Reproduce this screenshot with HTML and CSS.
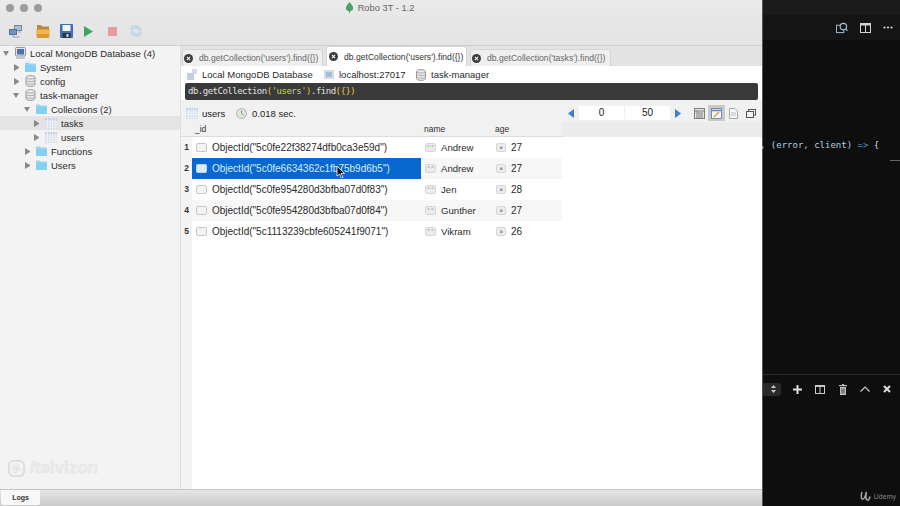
FILE: index.html
```html
<!DOCTYPE html>
<html lang="en">
<head>
<meta charset="utf-8">
<title>Robo 3T - 1.2</title>
<link rel="stylesheet" href="styles.css">
</head>
<body>
<svg class="defs" width="0" height="0" aria-hidden="true">
  <symbol id="folder" viewBox="0 0 11 10"><path d="M0 1.500q0-1 1-1h2.500l1 1H10q1 0 1 1V9q0 1-1 1H1q-1 0-1-1z" fill="#93d7f3"/><path d="M0 3h11v6q0 1-1 1H1q-1 0-1-1z" fill="#84d0f1"/></symbol>
  <symbol id="db" viewBox="0 0 10 12"><path d="M.5 2.500c0-2.500 9-2.500 9 0v7c0 2.500-9 2.500-9 0z" fill="#e9e9e9" stroke="#9a9a9a"/><path d="M.5 2.800c1 1.600 8 1.600 9 0M.5 5.400c1 1.600 8 1.600 9 0M.5 8c1 1.600 8 1.600 9 0" fill="none" stroke="#9a9a9a" stroke-width=".8"/></symbol>
  <symbol id="grid" viewBox="0 0 12 11"><rect width="12" height="11" fill="#d5ddeb"/><rect width="12" height="2" fill="#c3cfe2"/><path d="M0 4h12M0 6.500h12M0 9h12M2.500 0v11M5 0v11M7.500 0v11M10 0v11" stroke="#f6f8fb" stroke-width=".7"/></symbol>
  <symbol id="doc" viewBox="0 0 11 9"><rect x=".5" y=".5" width="10" height="8" rx="1.500" fill="#f4f4f4" stroke="#c6c6c6"/></symbol>
  <symbol id="docsel" viewBox="0 0 11 9"><rect x=".5" y=".5" width="10" height="8" rx="1" fill="#dbe9fa" stroke="#bcd6f3"/></symbol>
  <symbol id="str" viewBox="0 0 11 9"><rect x=".5" y=".5" width="10" height="8" rx="1.500" fill="#ececec" stroke="#d6d6d6"/><path d="M2.500 3h2M6.500 3h2" stroke="#9a9a9a"/></symbol>
  <symbol id="num" viewBox="0 0 10 9"><rect x=".5" y=".5" width="9" height="8" rx="1.500" fill="#ececec" stroke="#d6d6d6"/><rect x="4" y="3.500" width="2.500" height="2.500" fill="#9a9a9a"/></symbol>
  <symbol id="monitor" viewBox="0 0 11 12"><rect x=".5" y=".5" width="10" height="8.500" rx="1" fill="#dfe3ea" stroke="#8f959f"/><rect x="2" y="2" width="7" height="5.500" fill="#4f6fa8"/><rect x="1" y="10" width="9" height="2" fill="#c4c7cc"/></symbol>
  <symbol id="close" viewBox="0 0 10 10"><circle cx="5" cy="5" r="5" fill="#3b3b3b"/><path d="M3.200 3.200l3.600 3.600M6.800 3.200l-3.600 3.600" stroke="#f0f0f0" stroke-width="1.300"/></symbol>
</svg>

<div class="screen">
  <div class="app">
    <header class="titlebar">
      <div class="lights"><i></i><i></i><i></i></div>
      <div class="title">
        <svg width="9" height="11" viewBox="0 0 9 11"><path d="M4.500 0C7 3 8.500 4.500 8 7c-.4 1.500-2 2-3 2.200V11H4V9.200C3 9 1.400 8.500 1 7 .5 4.500 2 3 4.500 0z" fill="#4aa564"/></svg>
        <span>Robo 3T - 1.2</span>
      </div>
      <div class="toolbar">
        <svg class="tool" width="13" height="13" viewBox="0 0 13 13"><rect x="5.500" y=".5" width="7" height="5" fill="#a9c0dd" stroke="#6f87a8"/><rect x=".5" y="4.500" width="7" height="5" fill="#6f93c4" stroke="#56708f"/><path d="M4 10v2h7M9 7h3" stroke="#9aa3b0" fill="none"/></svg>
        <svg class="tool t2" width="14" height="13" viewBox="0 0 14 13"><path d="M1 0h4l1 1.500h7V5H1z" fill="#b88a3c"/><path d="M0 4.500h14l-1 8.500H1z" fill="#efb650"/><path d="M.5 9h13l-.5 4H1z" fill="#d89a32"/></svg>
        <svg class="tool t3" width="13" height="14" viewBox="0 0 13 14"><rect width="13" height="14" rx="1" fill="#3f6fae"/><rect x="2.500" y="1" width="8" height="6" fill="#f4f4f4"/><rect x="2.500" y="9" width="8" height="5" fill="#29364c"/><rect x="6.500" y="10" width="2" height="3" fill="#ddd"/></svg>
        <svg class="tool t4" width="9" height="11" viewBox="0 0 9 11"><path d="M0 0l9 5.500L0 11z" fill="#3fa46a"/></svg>
        <svg class="tool t5" width="9" height="9" viewBox="0 0 9 9"><rect width="9" height="9" rx=".5" fill="#e89a9f"/></svg>
        <svg class="tool t6" width="14" height="14" viewBox="0 0 14 14"><path d="M1 4l3-3h5l4 4-2 3-3-3H5L3 7zM13 10l-3 3H5L1 9l2-3 3 3h3l2-2z" fill="#c3d9e6"/></svg>
      </div>
    </header>

    <main class="body">
      <nav class="sidebar">
        <div class="tree">
          <div class="node l0"><b class="open"></b><svg class="ico" width="11" height="12"><use href="#monitor"/></svg><span>Local MongoDB Database (4)</span></div>
          <div class="node l1"><b></b><svg class="ico" width="11" height="10"><use href="#folder"/></svg><span>System</span></div>
          <div class="node l1"><b></b><svg class="ico" width="11" height="12"><use href="#db"/></svg><span>config</span></div>
          <div class="node l1"><b class="open"></b><svg class="ico" width="11" height="12"><use href="#db"/></svg><span>task-manager</span></div>
          <div class="node l2"><b class="open"></b><svg class="ico" width="11" height="10"><use href="#folder"/></svg><span>Collections (2)</span></div>
          <div class="node l3 selected"><b></b><svg class="ico" width="12" height="11"><use href="#grid"/></svg><span>tasks</span></div>
          <div class="node l3"><b></b><svg class="ico" width="12" height="11"><use href="#grid"/></svg><span>users</span></div>
          <div class="node l2"><b></b><svg class="ico" width="11" height="10"><use href="#folder"/></svg><span>Functions</span></div>
          <div class="node l2"><b></b><svg class="ico" width="11" height="10"><use href="#folder"/></svg><span>Users</span></div>
        </div>
        <div class="watermark">
          <svg width="19" height="19" viewBox="0 0 20 20"><rect x="2" y="2" width="16" height="16" rx="5" fill="none" stroke="#dcdcdc" stroke-width="2"/><path d="M10 10c-3-5-6-2-4 0 1 1 3 0 4 0zM10 10c5-3 2-6 0-4-1 1 0 3 0 4zM10 10c3 5 6 2 4 0-1-1-3 0-4 0zM10 10c-5 3-2 6 0 4 1-1 0-3 0-4z" fill="none" stroke="#dcdcdc"/></svg>
          <span>/telvizon</span>
        </div>
      </nav>

      <section class="content">
        <div class="tabs">
          <div class="tab"><svg width="9" height="9"><use href="#close"/></svg><span>db.getCollection('users').find({})</span></div>
          <div class="tab active"><svg width="9" height="9"><use href="#close"/></svg><span>db.getCollection('users').find({})</span></div>
          <div class="tab"><svg width="9" height="9"><use href="#close"/></svg><span>db.getCollection('tasks').find({})</span></div>
        </div>

        <div class="crumbs">
          <div class="crumb c1"><svg width="10" height="11" viewBox="0 0 10 11"><rect x="5" y="0" width="5" height="5" fill="#d3dce9"/><rect x="0" y="4" width="7" height="7" fill="#c3cfe0"/></svg><span>Local MongoDB Database</span></div>
          <div class="crumb c2"><svg width="10" height="10" viewBox="0 0 10 10"><rect width="10" height="9" fill="#d2dcea"/><rect x="2" y="2" width="6" height="5" fill="#a9bcd8"/></svg><span>localhost:27017</span></div>
          <div class="crumb c3"><svg width="10" height="12"><use href="#db"/></svg><span>task-manager</span></div>
        </div>

        <div class="query"><span class="q-m">db.getCollection</span><span class="q-y">(</span><span class="q-s">'users'</span><span class="q-y">)</span><span class="q-m">.find</span><span class="q-y">({})</span></div>

        <div class="results-bar">
          <svg class="rb-ico" width="12" height="11"><use href="#grid"/></svg>
          <span class="rb-name">users</span>
          <svg class="rb-clock" width="11" height="11" viewBox="0 0 11 11"><circle cx="5.500" cy="5.500" r="5" fill="#dfe7df" stroke="#a9b5ad"/><path d="M5.500 2.500v3l2 1.500" stroke="#7f8b85" fill="none"/></svg>
          <span>0.018 sec.</span>
          <div class="pager">
            <svg width="6" height="9" viewBox="0 0 6 9"><path d="M6 0v9L0 4.500z" fill="#3f7fd0"/></svg>
            <div class="pg-box">0</div>
            <div class="pg-box">50</div>
            <svg width="6" height="9" viewBox="0 0 6 9"><path d="M0 0v9l6-4.500z" fill="#3f7fd0"/></svg>
          </div>
          <div class="views">
            <div class="view"><svg width="11" height="11" viewBox="0 0 11 11"><rect x=".5" y=".5" width="10" height="10" fill="#e2e2e2" stroke="#808080"/><path d="M.5 3h10M4 5h5M4 7h5M4 9h5M3 3v7" stroke="#808080"/></svg></div>
            <div class="view on"><svg width="11" height="11" viewBox="0 0 11 11"><rect x=".5" y=".5" width="10" height="10" fill="#f5f5f5" stroke="#6f8db5"/><path d="M.5 2.500h10" stroke="#5f86bd" stroke-width="1.500"/><path d="M3 9l5-5" stroke="#d9a43f" stroke-width="1.500"/></svg></div>
            <div class="view"><svg width="9" height="11" viewBox="0 0 9 11"><path d="M.5.500h5.500l2.500 2.500v7.500h-8z" fill="#f5f5f5" stroke="#a8a8a8"/><path d="M2 5h5M2 7h5" stroke="#c0c0c0"/></svg></div>
            <div class="view"><svg width="10" height="9" viewBox="0 0 10 9"><rect x="2.500" y=".5" width="7" height="5.500" fill="none" stroke="#555"/><rect x=".5" y="2.500" width="7" height="6" fill="#f2f2f2" stroke="#555"/></svg></div>
          </div>
        </div>

        <div class="table-wrap">
          <div class="table">
            <div class="th corner"></div><div class="th">_id</div><div class="th">name</div><div class="th age">age</div><div class="th filler"></div>

            <div class="num">1</div>
            <div class="td id"><svg width="11" height="9"><use href="#doc"/></svg><span>ObjectId("5c0fe22f38274dfb0ca3e59d")</span></div>
            <div class="td"><svg width="11" height="9"><use href="#str"/></svg><span>Andrew</span></div>
            <div class="td n"><svg width="10" height="9"><use href="#num"/></svg><span>27</span></div>
            <div class="rest"></div>

            <div class="num">2</div>
            <div class="td id sel"><svg width="11" height="9"><use href="#docsel"/></svg><span>ObjectId("5c0fe6634362c1fb75b9d6b5")</span></div>
            <div class="td alt"><svg width="11" height="9"><use href="#str"/></svg><span>Andrew</span></div>
            <div class="td n alt"><svg width="10" height="9"><use href="#num"/></svg><span>27</span></div>
            <div class="rest"></div>

            <div class="num">3</div>
            <div class="td id"><svg width="11" height="9"><use href="#doc"/></svg><span>ObjectId("5c0fe954280d3bfba07d0f83")</span></div>
            <div class="td"><svg width="11" height="9"><use href="#str"/></svg><span>Jen</span></div>
            <div class="td n"><svg width="10" height="9"><use href="#num"/></svg><span>28</span></div>
            <div class="rest"></div>

            <div class="num">4</div>
            <div class="td id alt"><svg width="11" height="9"><use href="#doc"/></svg><span>ObjectId("5c0fe954280d3bfba07d0f84")</span></div>
            <div class="td alt"><svg width="11" height="9"><use href="#str"/></svg><span>Gunther</span></div>
            <div class="td n alt"><svg width="10" height="9"><use href="#num"/></svg><span>27</span></div>
            <div class="rest"></div>

            <div class="num">5</div>
            <div class="td id"><svg width="11" height="9"><use href="#doc"/></svg><span>ObjectId("5c1113239cbfe605241f9071")</span></div>
            <div class="td"><svg width="11" height="9"><use href="#str"/></svg><span>Vikram</span></div>
            <div class="td n"><svg width="10" height="9"><use href="#num"/></svg><span>26</span></div>
            <div class="rest"></div>

            <div class="gutter-fill"></div>
          </div>
        </div>
      </section>
    </main>

    <footer class="logs"><div class="logs-tab">Logs</div></footer>
  </div>

  <aside class="dark">
    <div class="dark-tabs"></div>
    <div class="dark-actions">
      <svg width="12" height="12" viewBox="0 0 13 13"><rect x=".5" y="3.500" width="8" height="8" fill="none" stroke="#a9c3d6"/><circle cx="8" cy="5" r="3.500" fill="#141414" stroke="#a9c3d6" stroke-width="1.200"/><path d="M10.500 7.500l2 2" stroke="#a9c3d6" stroke-width="1.200"/></svg>
      <svg width="11" height="10" viewBox="0 0 11 10"><rect x=".5" y=".5" width="10" height="9" fill="none" stroke="#d5d5d5"/><path d="M.5 1.500h10" stroke="#d5d5d5" stroke-width="2"/><path d="M5.500 1v8" stroke="#d5d5d5"/></svg>
      <svg width="10" height="3" viewBox="0 0 10 3"><circle cx="1.500" cy="1.500" r="1.100" fill="#ddd"/><circle cx="5" cy="1.500" r="1.100" fill="#ddd"/><circle cx="8.500" cy="1.500" r="1.100" fill="#ddd"/></svg>
    </div>
    <div class="editor">
      <div class="code"><span class="c-p">, </span><span class="c-v">(error, client)</span> <span class="c-k">=&gt;</span> <span class="c-p">{</span></div>
      <div class="minimark"></div>
    </div>
    <div class="term-bar">
      <div class="select-end"><svg width="5" height="8" viewBox="0 0 5 8"><path d="M2.500 0L5 3H0zM2.500 8L0 5h5z" fill="#ccc"/></svg></div>
      <div class="term-actions">
        <svg width="9" height="9" viewBox="0 0 9 9"><path d="M3.500 0h2v3.500H9v2H5.500V9h-2V5.500H0v-2h3.500z" fill="#ddd"/></svg>
        <svg width="10" height="9" viewBox="0 0 10 9"><rect x=".5" y=".5" width="9" height="8" fill="none" stroke="#ccc"/><path d="M.5 1.200h9" stroke="#ccc" stroke-width="1.500"/><path d="M5 1v7" stroke="#ccc"/></svg>
        <svg width="8" height="11" viewBox="0 0 8 11"><path d="M3 0h2v1h3v1.200H0V1h3zM1 3h6v8H1z" fill="#bbb"/><path d="M3 4.500v5M5 4.500v5" stroke="#111" stroke-width=".7"/></svg>
        <svg width="10" height="6" viewBox="0 0 10 6"><path d="M.5 5.500L5 1l4.500 4.500" fill="none" stroke="#ccc" stroke-width="1.200"/></svg>
        <svg width="8" height="8" viewBox="0 0 8 8"><path d="M1 1l6 6M7 1L1 7" stroke="#ddd" stroke-width="2"/></svg>
      </div>
    </div>
    <div class="udemy">
      <svg width="12" height="10" viewBox="0 0 13 11"><path d="M2 1c-1 4-1 8 1 8 2 0 3-4 4-8-1 5-1 9 1 9 1.500 0 2.500-2 3-4" fill="none" stroke="#a8a8a8" stroke-width="1.600"/></svg>
      <span>Udemy</span>
    </div>
  </aside>

  <svg class="cursor" width="10" height="14" viewBox="0 0 10 14"><path d="M1 1v10l2.500-2 2 4 1.500-.8-2-3.800h3.500z" fill="#111" stroke="#fff" stroke-width=".8"/></svg>
</div>
</body>
</html>
```
FILE: styles.css
```css
* { box-sizing: border-box; }
html, body { margin: 0; height: 100%; }
body { font-family: "Liberation Sans", Arial, sans-serif; color: #222; background: #0d0d0d; overflow: hidden; }
.defs { position: absolute; }
.screen { position: relative; display: flex; width: 900px; height: 506px; overflow: hidden; }

.app { width: 762px; height: 506px; display: flex; flex-direction: column; background: #fff; flex: none; }

.titlebar { height: 46px; flex: none; position: relative; background: linear-gradient(#eaeaea, #e3e3e3); border-bottom: 1px solid #cfcfcf; }
.lights { position: absolute; left: 6px; top: 4px; display: flex; gap: 6px; }
.lights i { width: 8px; height: 8px; border-radius: 50%; background: #9b9b9b; }
.title { display: flex; justify-content: center; align-items: center; gap: 4px; height: 15px; padding-right: 3px; font-size: 9.300px; color: #666; }
.toolbar { display: flex; align-items: center; padding: 2px 0 0 9px; height: 30px; }
.tool { flex: none; }
.t2 { margin-left: 14px; }
.t3 { margin-left: 10px; }
.t4 { margin-left: 11px; }
.t5 { margin-left: 15px; }
.t6 { margin-left: 12px; }

.body { flex: 1; display: flex; min-height: 0; }

.sidebar { width: 181px; flex: none; background: #f3f3f3; border-right: 1px solid #dedede; display: flex; flex-direction: column; justify-content: space-between; }
.node { height: 14px; display: flex; align-items: center; font-size: 9.500px; color: #2a2a2a; }
.node b { width: 5px; height: 7px; border-style: solid; border-width: 3.500px 0 3.500px 5px; border-color: transparent transparent transparent #8a8a8a; margin-right: 6px; flex: none; }
.node b.open { width: 6px; height: 5px; border-width: 5px 3px 0 3px; border-color: #8a8a8a transparent transparent transparent; margin-left: -1px; }
.node .ico { margin-right: 4px; flex: none; }
.l0 { padding-left: 4px; }
.l1 { padding-left: 14px; }
.l2 { padding-left: 25px; }
.l3 { padding-left: 34px; }
.node.selected { background: #e4e4e4; }
.watermark { display: flex; align-items: center; gap: 4px; padding: 0 0 11px 7px; color: #ececec; -webkit-text-stroke: .4px #dedede; font-size: 17px; font-weight: 700; }

.content { flex: 1; min-width: 0; display: flex; flex-direction: column; background: #fff; }

.tabs { height: 20px; flex: none; display: flex; gap: 3px; padding: 3px 0 0 1px; background: #e3e3e3; }
.tab { width: 141px; height: 17px; display: flex; align-items: center; gap: 6px; padding-left: 1px; background: #efefef; border: 1px solid #d4d4d4; border-bottom: 0; border-radius: 3px 3px 0 0; font-size: 8.600px; color: #666; white-space: nowrap; }
.tab.active { background: #fff; color: #333; height: 20px; margin-top: -3px; padding-left: 2px; }

.crumbs { height: 17px; flex: none; display: flex; align-items: center; font-size: 9.500px; color: #2a2a2a; background: #fff; }
.crumb { display: flex; align-items: center; gap: 5px; }
.c1 { width: 143px; padding-left: 6px; }
.c2 { width: 92px; }

.query { height: 17px; flex: none; margin: 0 4px; border-radius: 2px; background: #3a3a3a; font-family: "DejaVu Sans Mono", monospace; font-size: 9px; letter-spacing: -.5px; line-height: 16px; padding-left: 3px; color: #ddd; white-space: nowrap; }
.q-m { color: #e4e4e4; }
.q-y { color: #e8c14a; }
.q-s { color: #c9dc50; }

.results-bar { height: 22px; flex: none; display: flex; align-items: center; font-size: 9.500px; padding: 4px 0 0 5px; background: #f1f1f1; }
.rb-ico { margin-right: 4px; }
.rb-name { margin-right: 10px; width: 24px; }
.rb-clock { margin-right: 5px; }
.pager { display: flex; align-items: center; margin-left: auto; gap: 1px; }
.pg-box { width: 45px; height: 14px; background: #fff; text-align: center; line-height: 14px; font-size: 10px; }
.pager svg:first-child { margin-right: 4px; }
.pager svg:last-child { margin-left: 4px; }
.views { display: flex; margin-left: 10px; margin-right: 3px; }
.view { width: 17px; height: 16px; display: flex; align-items: center; justify-content: center; }
.view.on { background: #c9c9c9; }

.table-wrap { flex: 1; min-height: 0; }
.table { display: grid; grid-template-columns: 11px 229px 70px 71px 1fr; grid-template-rows: 15px repeat(5, 21px) 1fr; height: 100%; }
.th { background: #f1f1f1; border-bottom: 1px solid #dcdcdc; font-size: 8.500px; color: #333; line-height: 14px; padding-left: 3px; }
.th.age { padding-left: 4px; }
.th.corner { padding: 0; }
.th.filler { background: #ececec; border-bottom: 0; }
.num { background: #f4f4f4; font-size: 8.500px; font-weight: 700; text-align: center; line-height: 21px; color: #333; }
.td { display: flex; align-items: center; gap: 5px; padding-left: 4px; font-size: 9.600px; color: #2a2a2a; white-space: nowrap; min-width: 0; background: #fff; }
.td.id { font-size: 10px; }
.td.n { font-size: 10px; padding-left: 5px; }
.td.alt { background: #f7f7f7; }
.td.sel { background: #0868cf; color: #dcebff; }
.rest { background: #fff; }
.gutter-fill { background: #f4f4f4; }

.logs { height: 17px; flex: none; background: linear-gradient(#e6e6e6, #cbcbcb); border-top: 1px solid #c4c4c4; padding-left: 1px; }
.logs-tab { width: 39px; height: 15px; background: #f8f8f8; border-radius: 0 0 2px 2px; font-size: 7px; font-weight: 700; line-height: 15px; text-align: center; color: #333; }

.dark { flex: 1; min-width: 0; height: 506px; background: #0e0e0e; display: flex; flex-direction: column; border-left: 1px solid #555; color: #ddd; }
.dark-tabs { height: 15px; flex: none; background: #1b1b1b; }
.dark-actions { height: 25px; flex: none; display: flex; align-items: center; justify-content: flex-end; gap: 12px; padding-right: 7px; background: #141414; }
.editor { height: 335px; flex: none; position: relative; padding-top: 98px; border-bottom: 1px solid #2b2b2b; }
.code { margin-left: -3px; font-family: "DejaVu Sans Mono", monospace; font-size: 9px; line-height: 14px; color: #a9c3d6; white-space: nowrap; }
.c-p { color: #d8d8d8; }
.c-v { color: #b5d0e0; }
.c-k { color: #4a8fc7; }
.minimark { position: absolute; right: 0; top: 120px; width: 10px; height: 1px; background: #666; }
.term-bar { height: 28px; flex: none; display: flex; align-items: center; }
.select-end { width: 18px; height: 13px; background: #2a2a2a; border-radius: 0 3px 3px 0; display: flex; align-items: center; justify-content: flex-end; padding-right: 5px; }
.term-actions { flex: 1; display: flex; align-items: center; justify-content: space-between; padding: 0 9px 0 12px; }
.udemy { margin-top: auto; display: flex; align-items: center; justify-content: flex-end; gap: 2px; padding: 0 4px 5px 0; font-size: 7px; color: #888; }

.cursor { position: absolute; left: 336px; top: 165px; }
```
